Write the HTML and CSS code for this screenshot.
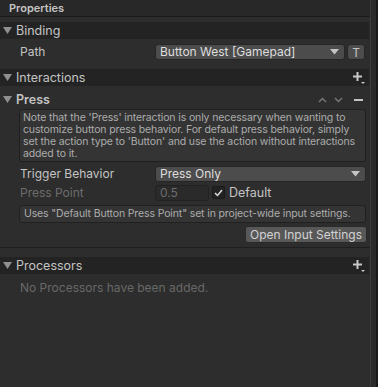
FILE: index.html
```html
<!DOCTYPE html>
<html lang="en">
<head>
    <meta charset="UTF-8">
    <title>Properties</title>
    <link rel="stylesheet" href="styles.css">
</head>
<body>
    <div class="window">
        <div class="panel">
            <header class="titlebar">Properties</header>

            <div class="foldout binding-head">
                <svg class="tri" width="10" height="8" viewBox="0 0 10 8"><polygon points="0,0 9,0 4.5,7" /></svg>
                <span>Binding</span>
            </div>
            <div class="row path-row">
                <span class="label">Path</span>
                <div class="dropdown path-drop">
                    <span>Button West [Gamepad]</span>
                    <svg class="arrow" width="9" height="6" viewBox="0 0 9 6"><polygon points="0,0 9,0 4.5,5.5" /></svg>
                </div>
                <button class="t-btn">T</button>
            </div>

            <div class="foldout interactions-head">
                <svg class="tri" width="10" height="8" viewBox="0 0 10 8"><polygon points="0,0 9,0 4.5,7" /></svg>
                <span>Interactions</span>
                <svg class="plus" width="12" height="12" viewBox="0 0 12 12">
                    <rect x="0" y="3.5" width="9" height="2" /><rect x="3.5" y="0" width="2" height="9" />
                    <polygon points="8,10 12,10 10,12" />
                </svg>
            </div>

            <div class="press-head">
                <svg class="tri" width="10" height="8" viewBox="0 0 10 8"><polygon points="0,0 9,0 4.5,7" /></svg>
                <span class="press-title">Press</span>
                <div class="press-tools">
                    <svg width="9" height="6" viewBox="0 0 9 6"><polyline points="1,5 4.5,1.5 8,5" /></svg>
                    <svg width="9" height="6" viewBox="0 0 9 6"><polyline points="1,1 4.5,4.5 8,1" /></svg>
                    <svg class="minus" width="9" height="2" viewBox="0 0 9 2"><rect x="0" y="0" width="9" height="2" /></svg>
                </div>
            </div>

            <div class="helpbox note">
                Note that the 'Press' interaction is only necessary when wanting to<br>
                customize button press behavior. For default press behavior, simply<br>
                set the action type to 'Button' and use the action without interactions<br>
                added to it.
            </div>

            <div class="row trigger-row">
                <span class="label">Trigger Behavior</span>
                <div class="dropdown trigger-drop">
                    <span>Press Only</span>
                    <svg class="arrow" width="9" height="6" viewBox="0 0 9 6"><polygon points="0,0 9,0 4.5,5.5" /></svg>
                </div>
            </div>

            <div class="row point-row">
                <span class="label disabled">Press Point</span>
                <div class="numfield">0.5</div>
                <div class="checkbox">
                    <svg width="9" height="8" viewBox="0 0 9 8"><polyline points="1,4 3.5,6.5 8,1" /></svg>
                </div>
                <span class="check-label">Default</span>
            </div>

            <div class="helpbox info">Uses "Default Button Press Point" set in project-wide input settings.</div>

            <div class="btn-row">
                <button class="open-btn">Open Input Settings</button>
            </div>

            <div class="separator"></div>

            <div class="foldout processors-head">
                <svg class="tri" width="10" height="8" viewBox="0 0 10 8"><polygon points="0,0 9,0 4.5,7" /></svg>
                <span>Processors</span>
                <svg class="plus" width="12" height="12" viewBox="0 0 12 12">
                    <rect x="0" y="3.5" width="9" height="2" /><rect x="3.5" y="0" width="2" height="9" />
                    <polygon points="8,10 12,10 10,12" />
                </svg>
            </div>
            <p class="empty">No Processors have been added.</p>
        </div>
        <div class="gutter"></div>
        <div class="edge"></div>
    </div>
</body>
</html>
```

FILE: styles.css
```css
body {
    margin: 0;
    background-color: #191919;
    font-family: Inter, "Noto Sans", sans-serif;
    font-size: 12px;
    color: #c4c4c4;
    overflow: hidden;
}

.window {
    display: flex;
    width: 378px;
    height: 387px;
}

.panel {
    width: 370px;
    background-color: #2d2d2d;
    border-right: 1px solid #3b3b3b;
    display: flex;
    flex-direction: column;
}

.gutter {
    width: 5px;
    background-color: #2b2b2b;
}

.edge {
    flex: 1;
    background-color: #191919;
}

.titlebar {
    height: 16px;
    line-height: 16px;
    padding-left: 9px;
    font-size: 11px;
    font-weight: 600;
    color: #c4c4c4;
    background-color: #282828;
    border-bottom: 1px solid #1c1c1c;
}

.foldout {
    width: 369px;
    height: 17px;
    flex-shrink: 0;
    background-color: #232323;
    display: flex;
    align-items: center;
    font-size: 12.5px;
}

.tri {
    fill: #8f8f8f;
    margin-left: 3px;
    margin-right: 3px;
}

.binding-head {
    margin-top: 5px;
}

.interactions-head {
    margin-top: 9px;
}

.processors-head {
    margin-top: 9px;
}

.plus {
    fill: #c8c8c8;
    margin-left: auto;
    margin-right: 4px;
    margin-top: 1px;
}

.row {
    display: flex;
    align-items: center;
    height: 17px;
    flex-shrink: 0;
    padding-left: 20px;
}

.label {
    width: 135px;
    font-size: 12px;
}

.label.disabled {
    color: #6c6c6c;
}

.path-row {
    margin-top: 4px;
}

.dropdown {
    height: 16px;
    box-sizing: border-box;
    background-color: #4c4c4c;
    border: 1px solid #262626;
    border-radius: 3px;
    display: flex;
    align-items: center;
    justify-content: space-between;
    padding: 0 5px 0 4px;
    color: #dedede;
    font-size: 12px;
}

.arrow {
    fill: #c4c4c4;
}

.path-drop {
    width: 190px;
}

.t-btn {
    width: 18px;
    height: 16px;
    margin-left: 2px;
    padding: 0;
    background-color: #4c4c4c;
    border: 1px solid #262626;
    border-radius: 3px;
    color: #c4c4c4;
    font-family: Inter, sans-serif;
    font-size: 12px;
}

.press-head {
    display: flex;
    align-items: center;
    height: 17px;
    flex-shrink: 0;
    margin-top: 5px;
}

.press-title {
    font-weight: 600;
    font-size: 12.5px;
}

.press-tools {
    margin-left: auto;
    margin-right: 7px;
    display: flex;
    align-items: center;
    gap: 7px;
}

.press-tools polyline {
    fill: none;
    stroke: #7a7a7a;
    stroke-width: 1.4;
}

.press-tools .minus {
    fill: #c4c4c4;
    margin-left: 4px;
}

.helpbox {
    margin-left: 19px;
    width: 347px;
    box-sizing: border-box;
    flex-shrink: 0;
    background-color: #343434;
    border: 1px solid #202020;
    border-radius: 3px;
    color: #acacac;
    font-size: 10.5px;
    letter-spacing: -0.13px;
    white-space: nowrap;
    overflow: hidden;
}

.note {
    margin-top: 1px;
    height: 53px;
    padding: 2px 3px 0 3px;
    line-height: 12px;
}

.trigger-row {
    margin-top: 3px;
}

.trigger-drop {
    width: 211px;
}

.point-row {
    margin-top: 2px;
}

.numfield {
    width: 54px;
    height: 16px;
    box-sizing: border-box;
    background-color: #2a2a2a;
    border: 1px solid #212121;
    border-radius: 3px;
    padding-left: 4px;
    line-height: 14px;
    color: #6c6c6c;
}

.checkbox {
    width: 13px;
    height: 13px;
    box-sizing: border-box;
    margin-left: 3px;
    background-color: #222222;
    border: 1px solid #1a1a1a;
    border-radius: 2px;
    display: flex;
    align-items: center;
    justify-content: center;
}

.checkbox polyline {
    fill: none;
    stroke: #dcdcdc;
    stroke-width: 1.5;
}

.check-label {
    margin-left: 4px;
    font-size: 12.5px;
}

.info {
    margin-top: 4px;
    height: 18px;
    line-height: 16px;
    padding-left: 4px;
}

.btn-row {
    display: flex;
    justify-content: flex-end;
    width: 367px;
    margin-top: 3px;
}

.open-btn {
    width: 122px;
    height: 17px;
    padding: 0;
    background-color: #585858;
    border: 1px solid #2a2a2a;
    border-radius: 3px;
    color: #d2d2d2;
    font-family: Inter, sans-serif;
    font-size: 12px;
}

.separator {
    margin-top: 4px;
    height: 1px;
    flex-shrink: 0;
    background-color: #1f1f1f;
}

.empty {
    margin: 6px 0 0 20px;
    color: #686868;
    font-size: 12px;
}
```
